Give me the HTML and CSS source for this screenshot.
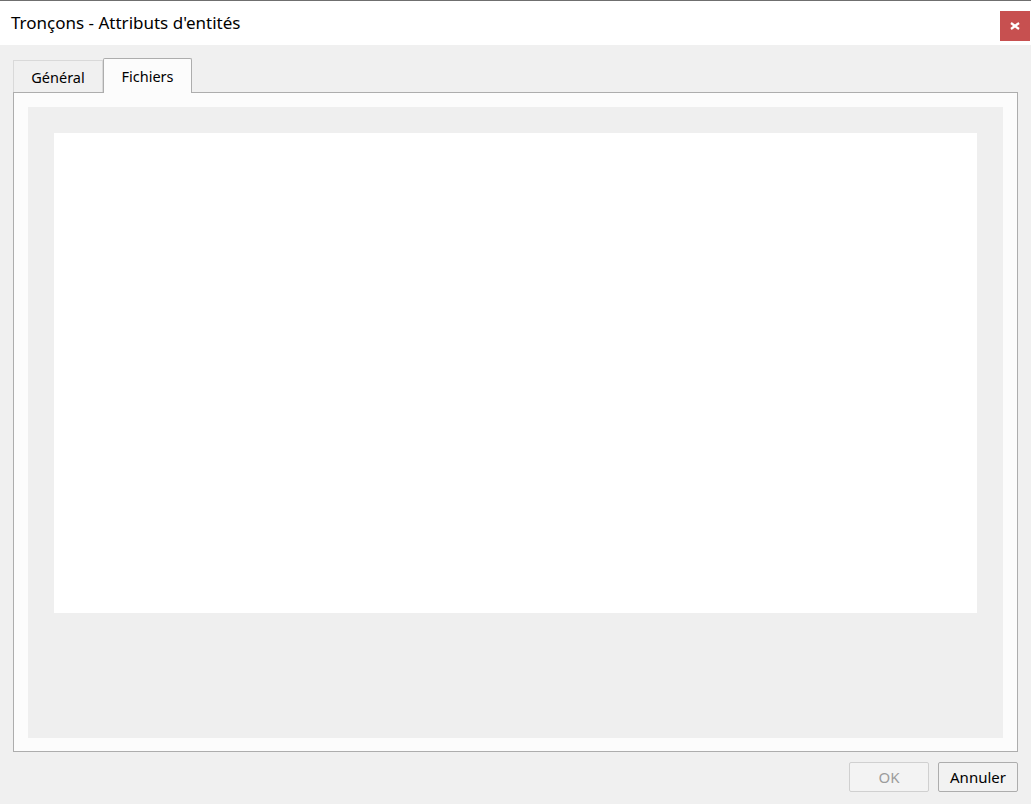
FILE: index.html
```html
<!DOCTYPE html>
<html lang="fr">
<head>
<meta charset="UTF-8">
<title>Tronçons - Attributs d'entités</title>
<link rel="stylesheet" href="styles.css">
</head>
<body>

<div class="topline"></div>

<div class="titlebar">
  <span class="title">Tronçons - Attributs d'entités</span>
  <button class="close">
    <svg width="10" height="8" viewBox="0 0 10 8">
      <path d="M1 1 L9 7 M9 1 L1 7" stroke="#fff" stroke-width="2.2"/>
    </svg>
  </button>
</div>

<div class="dialog">
  <div class="tabs">
    <div class="tab">Général</div>
    <div class="tab active">Fichiers</div>
  </div>

  <div class="pane">
    <div class="inner">
      <div class="sheet"></div>
    </div>
  </div>

  <div class="actions">
    <button class="btn" disabled>OK</button>
    <button class="btn">Annuler</button>
  </div>
</div>

</body>
</html>
```

FILE: styles.css
```css
body {
  margin: 0;
  width: 1031px;
  height: 804px;
  overflow: hidden;
  background: #f0f0f0;
  font-family: "Noto Sans", "Open Sans", sans-serif;
  color: #000;
}

.topline {
  height: 1px;
  background: #6f6f6f;
}

.titlebar {
  height: 44px;
  background: #fff;
  display: flex;
  align-items: flex-start;
}

.title {
  margin: 10px 0 0 11px;
  font-size: 17px;
  line-height: 24px;
}

.close {
  margin: 10px 1px 0 auto;
  width: 30px;
  height: 30px;
  border: none;
  padding: 0;
  background: #c75050;
  display: flex;
  align-items: center;
  justify-content: center;
}

/* onglets */
.dialog {
  padding: 13px 13px 0 13px;
}

.tabs {
  display: flex;
  align-items: flex-end;
  height: 35px;
  margin-bottom: -1px;
  position: relative;
  z-index: 1;
}

.tab {
  width: 90px;
  height: 32px;
  box-sizing: border-box;
  border: 1px solid #d9d9d9;
  border-bottom: none;
  background: #f0f0f0;
  font-size: 14.5px;
  line-height: 33px;
  text-align: center;
  margin-bottom: 1px;
}

.tab.active {
  width: 89px;
  height: 35px;
  margin-bottom: 0;
  background: #fcfcfc;
  border-color: #adadad;
  border-radius: 2px 2px 0 0;
  line-height: 35px;
}

.pane {
  height: 660px;
  box-sizing: border-box;
  border: 1px solid #adadad;
  background: #fcfcfc;
  padding: 14px;
}

.inner {
  height: 631px;
  box-sizing: border-box;
  background: #efefef;
  padding: 26px;
}

.sheet {
  height: 480px;
  background: #fff;
}

/* boutons */
.actions {
  display: flex;
  justify-content: flex-end;
  gap: 9px;
  padding-top: 10px;
}

.btn {
  width: 80px;
  height: 30px;
  border: 1px solid #adadad;
  border-radius: 2px;
  background: #f2f2f2;
  font-family: inherit;
  font-size: 15px;
  color: #000;
  padding: 0;
}

.btn:disabled {
  border-color: #d0d0d0;
  background: #f3f3f3;
  color: #9c9c9c;
}
```
